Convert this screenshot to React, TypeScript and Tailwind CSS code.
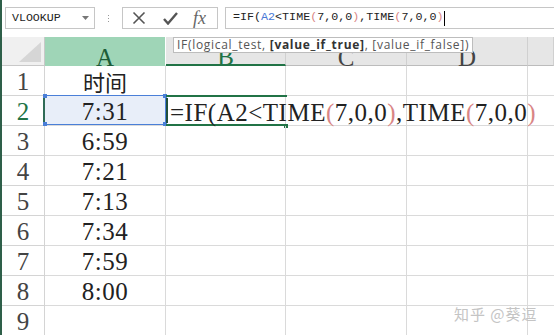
import React from "react";

const serif = "font-['Liberation_Serif','Times_New_Roman',serif]";
const mono = "font-['Liberation_Mono','Courier_New',monospace]";

const times = ["时间", "7:31", "6:59", "7:21", "7:13", "7:34", "7:59", "8:00", ""];
const cols = ["A", "B", "C", "D", ""];

function Paren({ children }: { children: React.ReactNode }) {
  return <span className="text-[#d98585]">{children}</span>;
}

function Formula({ refColor }: { refColor: string }) {
  return (
    <>
      =IF(<span className={refColor}>A2</span>&lt;TIME<Paren>(</Paren>7,0,0<Paren>)</Paren>,TIME
      <Paren>(</Paren>7,0,0<Paren>)</Paren>
    </>
  );
}

function Toolbar() {
  return (
    <div className="h-[37px] flex items-start pt-[7px] bg-white">
      {/* name box */}
      <div className="ml-[3px] w-[90px] h-[22px] border border-[#c6c6c6] flex items-center pl-[6px] pr-[5px]">
        <span className={`${mono} text-[11.6px] text-[#222] flex-1`}>VLOOKUP</span>
        <svg width="7" height="4" viewBox="0 0 7 4">
          <path d="M0 0h7L3.5 4z" fill="#777" />
        </svg>
      </div>
      {/* drag dots */}
      <div className="w-[27px] h-[22px] flex flex-col items-center justify-center gap-[2px]">
        <span className="w-[1px] h-[1px] bg-[#999]" />
        <span className="w-[1px] h-[1px] bg-[#999]" />
        <span className="w-[1px] h-[1px] bg-[#999]" />
      </div>
      {/* cancel / enter / fx */}
      <div className="w-[96px] h-[22px] border border-[#c6c6c6] flex items-center">
        <svg className="ml-[9px]" width="14" height="14" viewBox="0 0 14 14">
          <path d="M1.5 1.5l11 11M12.5 1.5l-11 11" stroke="#555" strokeWidth="1.6" />
        </svg>
        <svg className="ml-[17px]" width="15" height="13" viewBox="0 0 15 13">
          <path d="M1 7l4 4.5L14 1" stroke="#555" strokeWidth="2.4" fill="none" />
        </svg>
        <span className={`${serif} italic text-[18px] text-[#666] ml-[15px] leading-none`}>fx</span>
      </div>
      {/* formula box */}
      <div className="ml-[7px] flex-1 h-[22px] border border-r-0 border-[#c6c6c6] flex items-center pl-[7px]">
        <span className={`${mono} text-[11.7px] text-[#222] whitespace-nowrap`}>
          <Formula refColor="text-[#4a78d6]" />
        </span>
        <span className="w-[1px] h-[15px] bg-black ml-[1px]" />
      </div>
    </div>
  );
}

function Sheet() {
  const grid = "grid grid-cols-[43px_121px_120px_121px_121px_1fr] grid-rows-[29px_repeat(9,30px)]";
  return (
    <div className={grid}>
      {/* corner */}
      <div className="bg-[#f0f0f0] border-r border-b border-[#c8c8c8] relative">
        <svg className="absolute right-[3px] bottom-[3px]" width="22" height="20" viewBox="0 0 22 20">
          <path d="M22 0V20H0z" fill="#d6d6d6" />
        </svg>
      </div>
      {cols.map((c, i) => (
        <div
          key={c + i}
          className={
            i === 0
              ? "bg-[#9fd5b7] border-r border-white border-b border-b-[#9fd5b7] flex items-center justify-center"
              : i === 1
              ? "bg-[#e6e6e6] border-r border-[#d0d0d0] border-b-2 border-b-[#217346] flex items-center justify-center"
              : "bg-[#e6e6e6] border-r border-[#d0d0d0] border-b border-b-[#bcbcbc] flex items-center justify-center"
          }
        >
          <span
            className={`${serif} text-[25px] leading-none pt-[12px] ${
              i === 0 ? "text-[#1d5e38]" : i === 1 ? "text-[#217346]" : "text-[#444]"
            }`}
          >
            {c}
          </span>
        </div>
      ))}
      {times.map((t, r) => (
        <React.Fragment key={r}>
          <div className="bg-white border-r border-b border-[#d4d4d4] flex items-center justify-center">
            <span className={`${serif} text-[25px] leading-none pt-[2px] ${r === 1 ? "text-[#217346]" : "text-[#444]"}`}>
              {r + 1}
            </span>
          </div>
          <div className="border-r border-b border-[#dadada] relative flex items-center justify-center">
            {r === 1 && (
              <div className="absolute left-[-1px] top-[-1px] right-[-1px] bottom-0 border border-[#4a7fd8] bg-[#e8eef9]">
                <span className="absolute left-[-2px] top-[-2px] w-[4px] h-[4px] bg-[#4a7fd8]" />
                <span className="absolute right-[-2px] top-[-2px] w-[4px] h-[4px] bg-[#4a7fd8]" />
                <span className="absolute left-[-2px] bottom-[-2px] w-[4px] h-[4px] bg-[#4a7fd8]" />
                <span className="absolute right-[-2px] bottom-[-2px] w-[4px] h-[4px] bg-[#4a7fd8]" />
                <span className="absolute left-[-2px] top-[2px] bottom-[2px] w-[2px] bg-[#2f6b57]" />
              </div>
            )}
            <span
              className={`relative ${
                r === 0 ? "font-['Noto_Sans_CJK_SC',sans-serif] text-[22px]" : `${serif} text-[25px] tracking-[0.5px]`
              } leading-none text-[#222] pt-[1px]`}
            >
              {t}
            </span>
          </div>
          <div className="border-r border-b border-[#dadada] relative">
            {r === 1 && (
              <>
                <div className="absolute left-0 top-[-1px] w-[121px] bottom-[-1px] border-t-2 border-b-2 border-[#217346]" />
                <span className="absolute left-0 top-[2px] bottom-[2px] w-[2px] bg-[#1f4e3a]" />
                <span className="absolute right-[-3px] bottom-[-3px] w-[4px] h-[4px] bg-[#217346]" />
                <span
                  className={`absolute z-10 left-[4px] top-[4px] whitespace-nowrap ${serif} text-[25px] tracking-[0.5px] leading-none text-[#222]`}
                >
                  <Formula refColor="" />
                </span>
              </>
            )}
          </div>
          <div className="border-r border-b border-[#dadada]" />
          <div className="border-r border-b border-[#dadada]" />
          <div className="border-b border-[#dadada]" />
        </React.Fragment>
      ))}
    </div>
  );
}

export default function App() {
  return (
    <div className="w-[554px] h-[335px] overflow-hidden bg-white border-l-2 border-[#2e5f49] relative">
      <Toolbar />
      <Sheet />
      {/* function tooltip */}
      <div className="absolute left-[171px] top-[37px] h-[16px] px-[3px] bg-white border border-[#bdbdbd] flex items-center whitespace-nowrap font-['Open_Sans',sans-serif] text-[12px] tracking-[0.7px] text-[#555] leading-none">
        IF(logical_test,&nbsp;<b className="text-[#333] font-bold">[value_if_true]</b>, [value_if_false])
      </div>
      {/* watermark */}
      <div className="absolute left-[452px] top-[303px] font-['Noto_Sans_CJK_SC',sans-serif] text-[15px] text-[#c4c4c4] tracking-[1px]">
        知乎 @葵逗
      </div>
    </div>
  );
}
